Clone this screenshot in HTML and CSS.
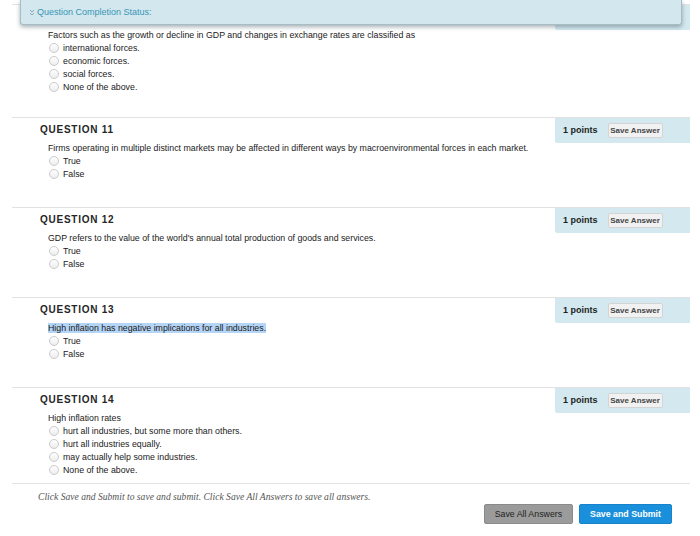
FILE: index.html
```html
<!DOCTYPE html>
<html lang="en">
<head>
<meta charset="utf-8">
<title>Take Test</title>
<link rel="stylesheet" href="styles.css">
</head>
<body>
<div class="status-bar">
  <svg class="status-icon" width="6" height="7" viewBox="0 0 6 7"><path d="M1 1 L3 3 L5 1 M1 4 L3 6 L5 4" fill="none" stroke="#8fa9b4" stroke-width="1"/></svg>
  <span class="status-text">Question Completion Status:</span>
</div>
<main class="page">
  <section class="question q-lead">
    <div class="q-head">
      <div class="q-title"></div>
      <div class="q-points"></div>
    </div>
    <div class="q-body">
      <p class="q-text">Factors such as the growth or decline in GDP and changes in exchange rates are classified as</p>
      <ul class="options">
        <li><span class="radio"></span>international forces.</li>
        <li><span class="radio"></span>economic forces.</li>
        <li><span class="radio"></span>social forces.</li>
        <li><span class="radio"></span>None of the above.</li>
      </ul>
    </div>
  </section>
  <section class="question">
    <div class="q-head">
      <h3 class="q-title">QUESTION 11</h3>
      <div class="q-points"><span class="pts">1 points</span><button class="save-btn">Save Answer</button></div>
    </div>
    <div class="q-body">
      <p class="q-text">Firms operating in multiple distinct markets may be affected in different ways by macroenvironmental forces in each market.</p>
      <ul class="options">
        <li><span class="radio"></span>True</li>
        <li><span class="radio"></span>False</li>
      </ul>
    </div>
  </section>
  <section class="question">
    <div class="q-head">
      <h3 class="q-title">QUESTION 12</h3>
      <div class="q-points"><span class="pts">1 points</span><button class="save-btn">Save Answer</button></div>
    </div>
    <div class="q-body">
      <p class="q-text">GDP refers to the value of the world's annual total production of goods and services.</p>
      <ul class="options">
        <li><span class="radio"></span>True</li>
        <li><span class="radio"></span>False</li>
      </ul>
    </div>
  </section>
  <section class="question">
    <div class="q-head">
      <h3 class="q-title">QUESTION 13</h3>
      <div class="q-points"><span class="pts">1 points</span><button class="save-btn">Save Answer</button></div>
    </div>
    <div class="q-body">
      <p class="q-text"><span class="hl">High inflation has negative implications for all industries.</span></p>
      <ul class="options">
        <li><span class="radio"></span>True</li>
        <li><span class="radio"></span>False</li>
      </ul>
    </div>
  </section>
  <section class="question q-last">
    <div class="q-head">
      <h3 class="q-title">QUESTION 14</h3>
      <div class="q-points"><span class="pts">1 points</span><button class="save-btn">Save Answer</button></div>
    </div>
    <div class="q-body">
      <p class="q-text">High inflation rates</p>
      <ul class="options">
        <li><span class="radio"></span>hurt all industries, but some more than others.</li>
        <li><span class="radio"></span>hurt all industries equally.</li>
        <li><span class="radio"></span>may actually help some industries.</li>
        <li><span class="radio"></span>None of the above.</li>
      </ul>
    </div>
  </section>
  <footer class="footer">
    <p class="footer-note">Click Save and Submit to save and submit. Click Save All Answers to save all answers.</p>
    <div class="footer-actions">
      <button class="btn btn-gray">Save All Answers</button>
      <button class="btn btn-blue">Save and Submit</button>
    </div>
  </footer>
</main>
</body>
</html>
```
FILE: styles.css
```css
html, body {
  margin: 0;
  padding: 0;
  background: #ffffff;
}
body {
  font-family: "Liberation Sans", Arial, sans-serif;
  font-size: 8.8px;
  color: #1a1a1a;
  position: relative;
}
.status-bar {
  position: absolute;
  left: 20px;
  top: 0;
  width: 652px;
  height: 24px;
  background: #d2e8ee;
  border: 1px solid #a7bcc4;
  border-top: none;
  border-radius: 0 0 3px 3px;
  box-shadow: 0 2px 4px rgba(60, 80, 90, 0.45);
  display: flex;
  align-items: center;
  padding-left: 8px;
  box-sizing: content-box;
  z-index: 5;
}
.status-icon {
  display: block;
  margin-right: 2px;
}
.status-text {
  color: #3a94b6;
  font-size: 9px;
}
.page {
  margin: 0 0 0 12px;
  width: 678px;
}
.question {
  border-top: 1px solid #e2e2e2;
  padding-bottom: 27px;
}
.q-lead {
  margin-top: 4px;
  padding-bottom: 24px;
}
.q-last {
  padding-bottom: 7px;
}
.q-head {
  display: flex;
  justify-content: space-between;
  align-items: center;
  height: 25px;
}
.q-title {
  margin: 0;
  padding-left: 28px;
  padding-bottom: 3px;
  font-size: 10px;
  font-weight: bold;
  letter-spacing: 0.75px;
  color: #262626;
}
.q-points {
  width: 127px;
  height: 25px;
  background: #d3e8ef;
  border-radius: 0 0 0 2px;
  display: flex;
  align-items: center;
  padding-left: 8px;
  gap: 10px;
}
.pts {
  font-weight: bold;
  font-size: 9px;
  color: #1e1e1e;
  padding-bottom: 2px;
}
.save-btn {
  font-family: "Liberation Sans", Arial, sans-serif;
  font-size: 8px;
  font-weight: bold;
  color: #454545;
  background: #f1f1f1;
  border: 1px solid #d4d4d4;
  border-radius: 2px;
  height: 15px;
  width: 55px;
  padding: 0;
}
.q-body {
  padding-left: 36px;
}
.q-text {
  margin: 0;
  line-height: 11px;
}
.hl {
  background: #b5d5f7;
}
.options {
  list-style: none;
  margin: 0;
  padding: 0;
}
.options li {
  display: flex;
  align-items: center;
  height: 13px;
}
.radio {
  width: 8px;
  height: 8px;
  border-radius: 50%;
  border: 1px solid #cacaca;
  background: linear-gradient(#ffffff, #ededed);
  margin-left: 1px;
  margin-right: 4px;
  flex: none;
}
.footer {
  border-top: 1px solid #e3e3e3;
  padding-top: 6px;
}
.footer-note {
  margin: 0;
  padding-left: 26px;
  line-height: 14px;
  font-family: "Liberation Serif", "Times New Roman", serif;
  font-style: italic;
  font-size: 9.6px;
  color: #555555;
}
.footer-actions {
  display: flex;
  justify-content: flex-end;
  gap: 6px;
  padding-right: 18px;
}
.btn {
  font-family: "Liberation Sans", Arial, sans-serif;
  font-size: 8.8px;
  height: 20px;
  border-radius: 2px;
}
.btn-gray {
  padding: 0 10px;
  background: #9b9b9b;
  border: 1px solid #8a8a8a;
  color: #222222;
}
.btn-blue {
  padding: 0 10px;
  background: #1a8fdb;
  border: 1px solid #1683cb;
  color: #ffffff;
  font-weight: bold;
}
```
